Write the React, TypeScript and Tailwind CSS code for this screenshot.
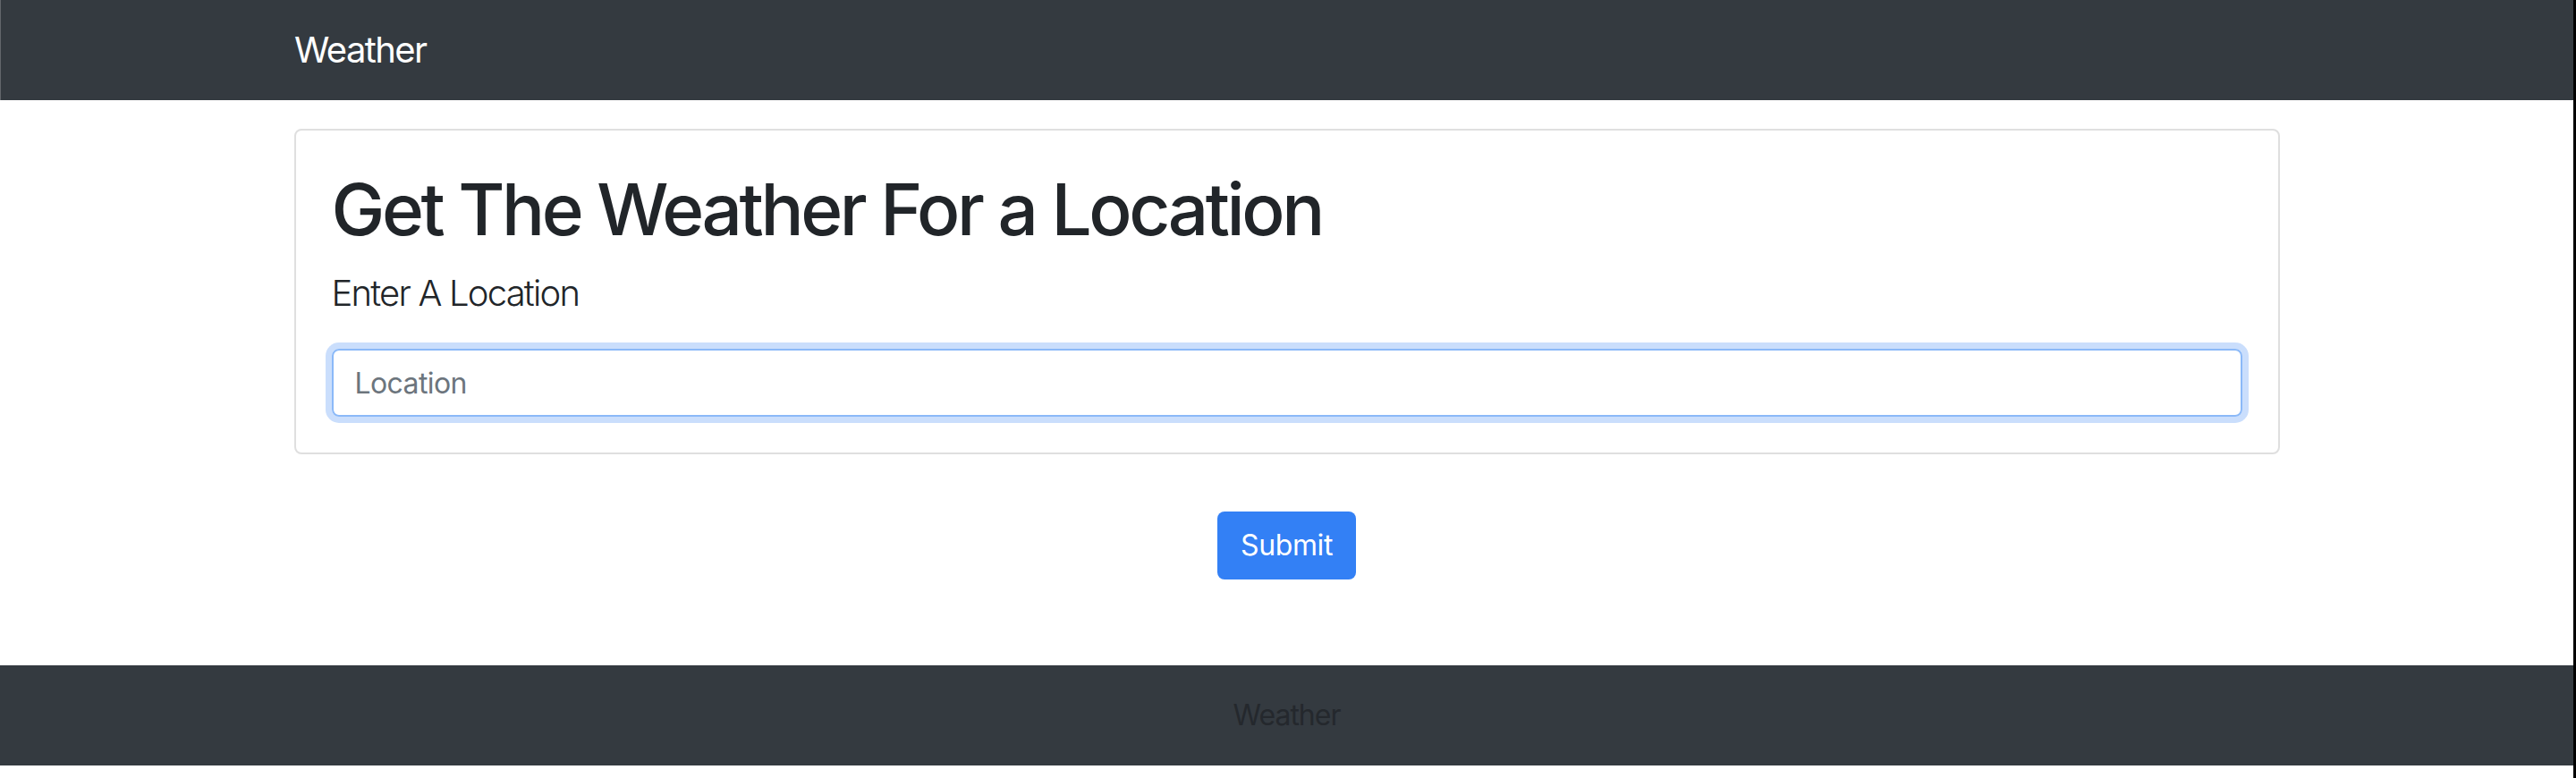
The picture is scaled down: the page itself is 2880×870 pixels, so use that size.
const font = { fontFamily: "Inter, 'Noto Sans', sans-serif" };

const Navbar = () => (
  <header className="h-[112px] bg-[#343a40] border-l border-[#62666b]">
    <div className="mx-auto flex h-full w-[2280px] items-center px-[30px]">
      <a className="text-[40px] leading-[1.5] tracking-[-1.6px] text-white" href="#">
        Weather
      </a>
    </div>
  </header>
);

const Footer = () => (
  <footer className="flex h-[112px] items-center justify-center bg-[#343a40]">
    <span className="text-[32px] leading-[1.5] tracking-[-1px] text-[#24282d]">Weather</span>
  </footer>
);

export default function App() {
  return (
    <div className="flex min-h-[870px] w-full bg-white" style={font}>
      <div className="flex min-w-0 flex-1 flex-col">
        <Navbar />

        <main className="mx-auto w-[2280px] px-[30px] pt-[32px]">
          <div className="rounded-[8px] border-2 border-[#dfdfdf] p-[40px]">
            <h1 className="mb-[16px] text-[80px] font-medium leading-[1.2] tracking-[-3.4px] text-[#212529]">
              Get The Weather For a Location
            </h1>
            <p className="mb-[32px] text-[40px] font-light leading-[1.5] tracking-[-1.8px] text-[#212529]">
              Enter A Location
            </p>
            <input
              type="text"
              placeholder="Location"
              className="block h-[76px] w-full rounded-[8px] border-2 border-[#8bb9f8] px-[24px] text-[32px] tracking-[-0.6px] text-[#495057] shadow-[0_0_0_7px_#cadefc] outline-none placeholder:text-[#6c757d]"
            />
          </div>
        </main>

        <div className="mt-[64px] mb-[96px] flex justify-center">
          <button
            type="button"
            className="h-[76px] rounded-[8px] bg-[#3380f5] px-[26px] text-[32px] leading-[1.5] tracking-[-0.4px] text-white"
          >
            Submit
          </button>
        </div>

        <Footer />
      </div>
      <div className="w-[3px] shrink-0 bg-black" />
    </div>
  );
}
